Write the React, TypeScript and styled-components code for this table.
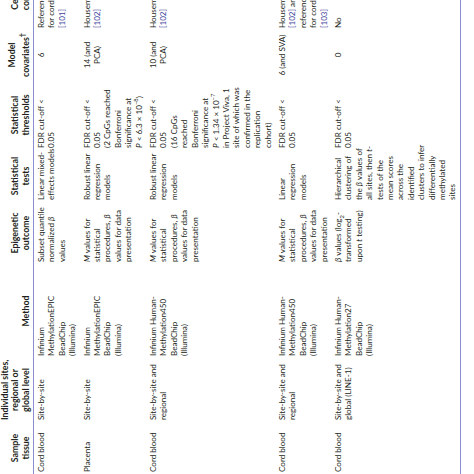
import React from 'react';
import styled, { createGlobalStyle } from 'styled-components';

const GlobalStyle = createGlobalStyle`
  html, body {
    margin: 0;
    padding: 0;
    background: #ffffff;
  }
`;

const Stage = styled.div`
  position: relative;
  width: 474px;
  height: 474px;
  overflow: hidden;
  background: #ffffff;
`;

// the page is a landscape table turned on its side
const Turned = styled.div`
  width: 474px;
  height: 474px;
  transform: rotate(-90deg);
  transform-origin: 50% 50%;
`;

const Table = styled.div`
  width: 524px;
  font-family: Lato, 'Open Sans', sans-serif;
  color: #231f20;
`;

const COLS = '52px 64px 94px 62px 52px 70px 50px 80px';

const HeadRow = styled.div`
  display: grid;
  grid-template-columns: ${COLS};
  height: 33px;
  border-bottom: 1.5px solid #8b8fd2;
`;

const BodyRow = styled.div<{ $last?: boolean }>`
  display: grid;
  grid-template-columns: ${COLS};
  padding: 2px 0;
  border-bottom: ${(p) => (p.$last ? '1.5px solid #8b8fd2' : 'none')};
`;

const HeadCell = styled.div`
  align-self: end;
  padding: 0 2px 2px;
  font-size: 8.8px;
  font-weight: 700;
  line-height: 10.4px;
  text-align: center;
  white-space: nowrap;
`;

const Cell = styled.div<{ $center?: boolean }>`
  padding: 0 2px;
  font-size: 8.1px;
  line-height: 10.4px;
  text-align: ${(p) => (p.$center ? 'center' : 'left')};
  white-space: nowrap;

  sup,
  sub {
    font-size: 5.8px;
    line-height: 0;
  }
`;

const Ref = styled.span`
  color: #3d3f9c;
`;

const headers = [
  <>Sample<br />tissue</>,
  <>Individual sites,<br />regional or<br />global level</>,
  <>Method</>,
  <>Epigenetic<br />outcome</>,
  <>Statistical<br />tests</>,
  <>Statistical<br />thresholds</>,
  <>Model<br />covariates<sup>†</sup></>,
  <>Cell count<br />correction</>,
];

const epic = <>Infinium<br />MethylationEPIC<br />BeadChip<br />(Illumina)</>;
const m450 = <>Infinium Human-<br />Methylation450<br />BeadChip<br />(Illumina)</>;
const mValues = (
  <>
    <i>M</i> values for<br />statistical<br />procedures, <i>β</i><br />values for data<br />presentation
  </>
);
const fdr = <>FDR cut-off &lt;<br />0.05</>;

const rows: React.ReactNode[][] = [
  [
    <>Cord blood</>,
    <>Site-by-site</>,
    epic,
    <>Subset quantile<br />normalized <i>β</i><br />values</>,
    <>Linear mixed-<br />effects models</>,
    fdr,
    <>6</>,
    <>Reference<br />for cord<br /><Ref>[101]</Ref></>,
  ],
  [
    <>Placenta</>,
    <>Site-by-site</>,
    epic,
    mValues,
    <>Robust linear<br />regression<br />models</>,
    <>
      FDR cut-off &lt;<br />0.05<br />(2 CpGs reached<br />Bonferroni<br />significance at<br />
      <i>P</i> &lt; 6.3 × 10<sup>−8</sup>)
    </>,
    <>14 (and<br />PCA)</>,
    <>Houseman<br /><Ref>[102]</Ref></>,
  ],
  [
    <>Cord blood</>,
    <>Site-by-site and<br />regional</>,
    m450,
    mValues,
    <>Robust linear<br />regression<br />models</>,
    <>
      FDR cut-off &lt;<br />0.05<br />(16 CpGs<br />reached<br />Bonferroni<br />significance at<br />
      <i>P</i> &lt; 1.34 × 10<sup>−7</sup><br />in Project Viva, 1<br />site of which was<br />confirmed in the<br />
      replication<br />cohort)
    </>,
    <>10 (and<br />PCA)</>,
    <>Houseman<br /><Ref>[102]</Ref></>,
  ],
  [
    <>Cord blood</>,
    <>Site-by-site and<br />regional</>,
    m450,
    mValues,
    <>Linear<br />regression<br />models</>,
    fdr,
    <>6 (and SVA)</>,
    <>Houseman<br /><Ref>[102]</Ref> and<br />reference<br />for cord<br /><Ref>[103]</Ref></>,
  ],
  [
    <>Cord blood</>,
    <>Site-by-site and<br />global (LINE-1)</>,
    <>Infinium Human-<br />Methylation27<br />BeadChip<br />(Illumina)</>,
    <><i>β</i> values (log<sub>2</sub>-<br />transformed<br />upon <i>t</i> testing)</>,
    <>
      Hierarchical<br />clustering of<br />the <i>β</i> values of<br />all sites, then <i>t</i>-<br />tests of the<br />
      mean scores<br />across the<br />identified<br />clusters to infer<br />differentially<br />methylated<br />sites
    </>,
    fdr,
    <>0</>,
    <>No</>,
  ],
];

const App = () => (
  <>
    <GlobalStyle />
    <Stage>
      <Turned>
        <Table>
          <HeadRow>
            {headers.map((h, i) => (
              <HeadCell key={i}>{h}</HeadCell>
            ))}
          </HeadRow>
          {rows.map((row, r) => (
            <BodyRow key={r} $last={r === rows.length - 1}>
              {row.map((c, i) => (
                <Cell key={i} $center={i === 6}>
                  {c}
                </Cell>
              ))}
            </BodyRow>
          ))}
        </Table>
      </Turned>
    </Stage>
  </>
);

export default App;
